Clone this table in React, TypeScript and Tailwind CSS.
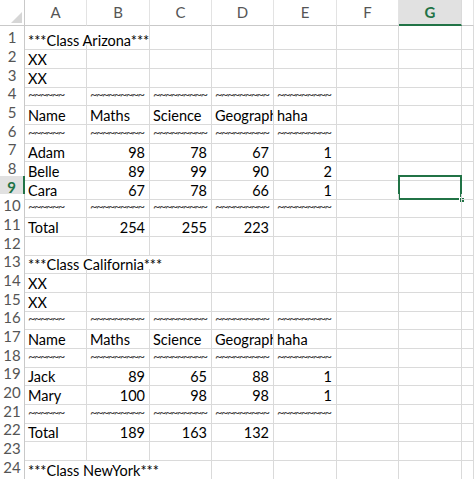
import React from "react";

type Cell = string | { text: string; span: number };

const COLS = ["A", "B", "C", "D", "E", "F", "G", ""];
const TILDE_A = "~~~~~~";
const TILDE = "~~~~~~~~~";
const tildeRow: Cell[] = [TILDE_A, TILDE, TILDE, TILDE, TILDE];
const headRow: Cell[] = ["Name", "Maths", "Science", "Geography", "haha"];

const rows: Cell[][] = [
  [{ text: "***Class Arizona***", span: 2 }],
  ["XX"],
  ["XX"],
  tildeRow,
  headRow,
  tildeRow,
  ["Adam", "98", "78", "67", "1"],
  ["Belle", "89", "99", "90", "2"],
  ["Cara", "67", "78", "66", "1"],
  tildeRow,
  ["Total", "254", "255", "223"],
  [],
  [{ text: "***Class California***", span: 3 }],
  ["XX"],
  ["XX"],
  tildeRow,
  headRow,
  tildeRow,
  ["Jack", "89", "65", "88", "1"],
  ["Mary", "100", "98", "98", "1"],
  tildeRow,
  ["Total", "189", "163", "132"],
  [],
  [{ text: "***Class NewYork***", span: 3 }],
];

const font = { fontFamily: "Lato, 'Liberation Sans', sans-serif" };

const spanClass: Record<number, string> = {
  1: "col-span-1",
  2: "col-span-2",
  3: "col-span-3",
};

const DataCell: React.FC<{ value: string; span?: number }> = ({ value, span = 1 }) => {
  const isNum = /^\d+$/.test(value);
  const isTilde = value.startsWith("~");
  return (
    <div
      className={`relative flex items-end overflow-hidden whitespace-nowrap border-r border-b border-[#dadada] ${spanClass[span]} ${
        isNum ? "justify-end pr-[4px]" : "pl-[3px]"
      }`}
    >
      {isTilde ? (
        <span className="mb-[6px] text-[13px] leading-[10px] tracking-[-1.6px] text-[#444]">{value}</span>
      ) : (
        <span className="text-[14.5px] leading-[17px] text-black">{value}</span>
      )}
    </div>
  );
};

export default function App() {
  return (
    <div className="h-[479px] w-[474px] overflow-hidden bg-white select-none" style={font}>
      {/* column headers */}
      <div className="grid h-[26px] grid-cols-[25px_62px_63px_62px_62px_63px_62px_63px_1fr]">
        <div className="relative border-r border-b border-[#c9c9c9] bg-white">
          <svg className="absolute right-[2px] bottom-[2px]" width="11" height="11" viewBox="0 0 11 11">
            <polygon points="11,0 11,11 0,11" fill="#d6d6d6" />
          </svg>
        </div>
        {COLS.map((c, i) =>
          c === "G" ? (
            <div
              key={i}
              className="flex items-center justify-center border-r border-b-2 border-r-[#dadada] border-b-[#217346] bg-[#e1e1e1] text-[15px] font-bold text-[#217346]"
            >
              {c}
            </div>
          ) : (
            <div
              key={i}
              className="flex items-center justify-center border-r border-b border-r-[#e3e3e3] border-b-[#c9c9c9] bg-white text-[15px] text-[#555]"
            >
              {c}
            </div>
          )
        )}
      </div>

      {rows.map((row, r) => {
        const num = r + 1;
        const h = r % 3 === 2 ? "h-[18px]" : "h-[19px]";
        const cells: React.ReactNode[] = [];
        let col = 0;
        row.forEach((cell, k) => {
          if (typeof cell === "string") {
            cells.push(<DataCell key={k} value={cell} />);
            col += 1;
          } else {
            cells.push(<DataCell key={k} value={cell.text} span={cell.span} />);
            col += cell.span;
          }
        });
        while (col < 8) {
          const isSel = num === 9 && col === 6;
          cells.push(
            <div key={`e${col}`} className="relative border-r border-b border-[#dadada]">
              {isSel && (
                <>
                  <div className="absolute -top-[1px] -left-[1px] -right-[1px] -bottom-[1px] border-2 border-[#217346]" />
                  <div className="absolute -right-[4px] -bottom-[4px] h-[6px] w-[6px] border border-white bg-[#217346]" />
                </>
              )}
            </div>
          );
          col += 1;
        }
        return (
          <div key={r} className={`grid ${h} grid-cols-[25px_62px_63px_62px_62px_63px_62px_63px_1fr]`}>
            {num === 9 ? (
              <div className="flex items-center justify-center border-r-2 border-b border-r-[#217346] border-b-[#c9c9c9] bg-[#e1e1e1] text-[15px] font-bold text-[#217346]">
                {num}
              </div>
            ) : (
              <div className="flex items-center justify-center border-r border-b border-r-[#c9c9c9] border-b-[#e3e3e3] bg-white text-[15px] text-[#555]">
                {num}
              </div>
            )}
            {cells}
          </div>
        );
      })}
    </div>
  );
}
